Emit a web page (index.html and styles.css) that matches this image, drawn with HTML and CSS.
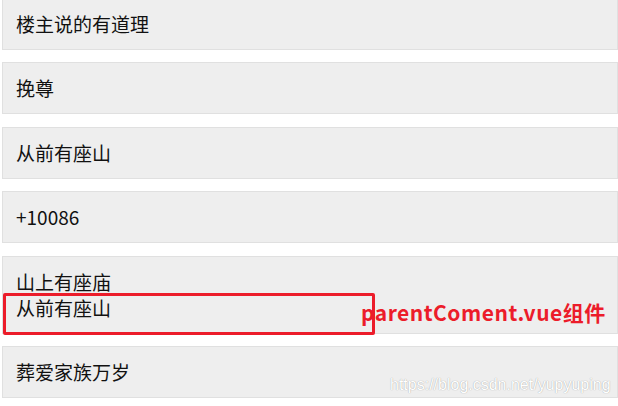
FILE: index.html
```html
<!DOCTYPE html>
<html lang="zh-CN">
<head>
<meta charset="utf-8">
<title>comments</title>
<link rel="stylesheet" href="styles.css">
</head>
<body>
<div class="list">
  <div class="item">楼主说的有道理</div>
  <div class="item">挽尊</div>
  <div class="item">从前有座山</div>
  <div class="item">+10086</div>
  <div class="item">
    <div class="line">山上有座庙</div>
    <div class="line">从前有座山</div>
  </div>
  <div class="item">葬爱家族万岁</div>
</div>
<div class="mark-box"></div>
<div class="mark-label">parentComent.vue组件</div>
<div class="watermark">https://blog.csdn.net/yupyuping</div>
</body>
</html>
```

FILE: styles.css
```css
html, body {
  margin: 0;
  padding: 0;
  background: #ffffff;
  overflow: hidden;
}
body {
  position: relative;
  width: 618px;
  height: 406px;
  font-family: "Noto Sans CJK SC", "Noto Sans", sans-serif;
  color: #111;
}
.list {
  display: flex;
  flex-direction: column;
  gap: 12.5px;
  margin: -2.5px 0 0 2px;
}
.item {
  background: #eeeeee;
  border: 1px solid #e0e0e0;
  padding: 12px 13px;
  font-size: 19px;
  line-height: 26px;
}
.mark-box {
  position: absolute;
  left: 3px;
  top: 293px;
  width: 366px;
  height: 36px;
  border: 3px solid #ec1c2a;
  border-radius: 2px;
}
.mark-label {
  position: absolute;
  left: 361px;
  top: 298px;
  font-family: "Noto Sans CJK SC", sans-serif;
  font-weight: bold;
  font-size: 21px;
  line-height: 28px;
  color: #ec1c2a;
  letter-spacing: 0.5px;
}
.watermark {
  position: absolute;
  left: 390px;
  top: 375px;
  font-family: "Liberation Sans", Arial, sans-serif;
  font-size: 16px;
  line-height: 20px;
  color: #ffffff;
  text-shadow: 0 0 1px rgba(0, 0, 0, 0.4);
}
```
